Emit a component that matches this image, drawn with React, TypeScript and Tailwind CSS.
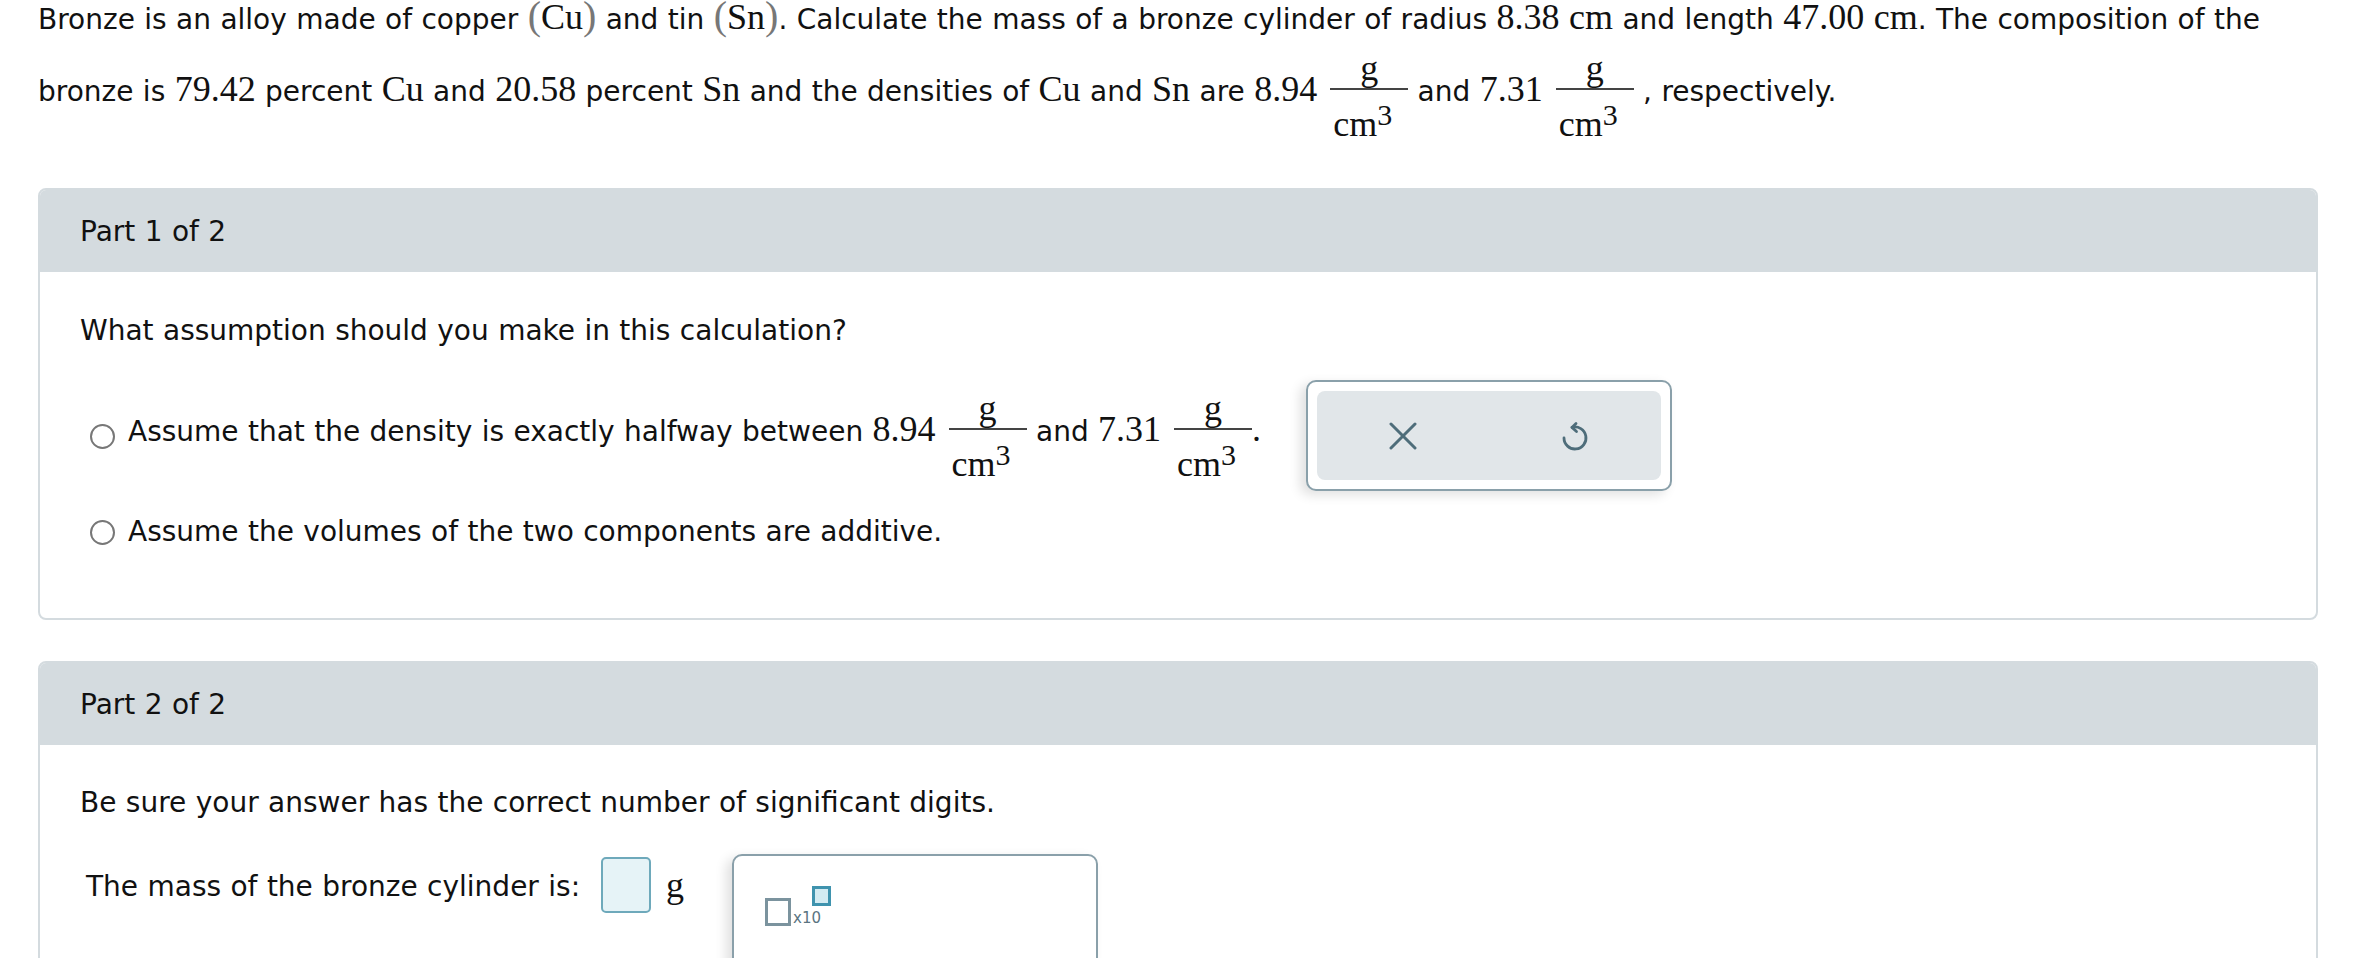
import React from "react";

function M({ children }: { children: React.ReactNode }) {
  return <span className="font-['Liberation_Serif',serif] text-[36px] leading-[0]">{children}</span>;
}

function Paren({ children }: { children: React.ReactNode }) {
  return (
    <span className="font-['Liberation_Serif',serif] leading-[0]">
      <span className="text-[40px] text-[#777]">(</span>
      <span className="text-[36px]">{children}</span>
      <span className="text-[40px] text-[#777]">)</span>
    </span>
  );
}

function Frac() {
  return (
    <span className="inline-flex flex-col w-[78px] align-[21px] ml-[13px] font-['Liberation_Serif',serif] text-[36px] leading-none [word-spacing:0px]">
      <span className="self-center leading-none">g</span>
      <span className="mt-[2px] h-[2px] bg-[#444]" />
      <span className="mt-[16px] pl-[3px] leading-none whitespace-nowrap">
        cm<span className="text-[30px] align-[11px] leading-[0]">3</span>
      </span>
    </span>
  );
}

function Radio() {
  return <span className="block w-[25px] h-[25px] rounded-full border-2 border-[#777] bg-white shrink-0" />;
}

function XIcon() {
  return (
    <svg width="28" height="28" viewBox="0 0 28 28" fill="none" stroke="#4e6d7a" strokeWidth="3" strokeLinecap="round">
      <path d="M2 2 L26 26" />
      <path d="M26 2 L2 26" />
    </svg>
  );
}

function UndoIcon() {
  return (
    <svg width="30" height="32" viewBox="0 0 30 32" fill="none" stroke="#4e6d7a" strokeWidth="2.8" strokeLinecap="round" strokeLinejoin="round">
      <path d="M4 18 A11 11 0 1 0 12 7.4" />
      <path d="M16 3.4 L12 7.4 L16.5 11.5" />
    </svg>
  );
}

function Toolbox() {
  return (
    <div className="w-[366px] h-[111px] border-2 border-[#8aa0aa] rounded-[10px] bg-white p-[9px] shadow-[-6px_4px_12px_rgba(0,0,0,0.12)] shrink-0">
      <div className="flex h-full rounded-[8px] bg-[#e1e6e9]">
        <div className="flex-1 flex items-center justify-center">
          <XIcon />
        </div>
        <div className="flex-1 flex items-center justify-center">
          <UndoIcon />
        </div>
      </div>
    </div>
  );
}

export default function App() {
  return (
    <div className="min-h-screen bg-white text-[#111] font-['DejaVu_Sans',sans-serif] text-[28px] [word-spacing:0.5px] overflow-hidden">
      <div className="w-[2280px] ml-[38px]">
        <div className="h-[40px] leading-[40px] whitespace-nowrap">
          Bronze is an alloy made of copper <Paren>Cu</Paren> and tin <Paren>Sn</Paren>. Calculate the mass of a bronze cylinder of radius <M>8.38 cm</M> and length <M>47.00 cm</M>. The composition of the
        </div>
        <div className="mt-[10px] leading-[40px] whitespace-nowrap">
          bronze is <M>79.42</M> percent <M>Cu</M> and <M>20.58</M> percent <M>Sn</M> and the densities of <M>Cu</M> and <M>Sn</M> are <M>8.94</M>
          <Frac /> and <M>7.31</M>
          <Frac /> , respectively.
        </div>

        <div className="mt-[46px] border-2 border-[#d4dbdf] rounded-[8px] overflow-hidden">
          <div className="h-[82px] bg-[#d4dbdf] pl-[40px] pt-[22px] leading-[40px]">Part 1 of 2</div>
          <div className="pl-[40px] pt-[39px] pb-[66px]">
            <div className="leading-[40px]">What assumption should you make in this calculation?</div>
            <div className="mt-[39px] flex items-start">
              <div className="w-[1226px] shrink-0">
                <div className="flex items-center pl-[10px]">
                  <Radio />
                  <div className="ml-[13px] leading-[40px] whitespace-nowrap">
                    Assume that the density is exactly halfway between <M>8.94</M>
                    <Frac /> and <M>7.31</M>
                    <Frac />
                    <M>.</M>
                  </div>
                </div>
                <div className="mt-[30px] flex items-center pl-[10px]">
                  <Radio />
                  <div className="ml-[13px] leading-[40px] whitespace-nowrap">
                    Assume the volumes of the two components are additive.
                  </div>
                </div>
              </div>
              <div className="-mt-[10px]">
                <Toolbox />
              </div>
            </div>
          </div>
        </div>

        <div className="mt-[41px] border-2 border-[#d4dbdf] rounded-[8px] overflow-hidden">
          <div className="h-[82px] bg-[#d4dbdf] pl-[40px] pt-[22px] leading-[40px]">Part 2 of 2</div>
          <div className="pl-[40px] pt-[38px] pb-[120px]">
            <div className="leading-[40px]">Be sure your answer has the correct number of significant digits.</div>
            <div className="mt-[31px] flex items-start pl-[6px]">
              <div className="mt-[13px] leading-[40px] whitespace-nowrap">The mass of the bronze cylinder is:</div>
              <div className="ml-[21px] mt-[3px] w-[50px] h-[56px] border-2 border-[#6ea9bb] bg-[#e6f3f7] rounded-[5px] shrink-0" />
              <div className="ml-[15px] mt-[11px] font-['Liberation_Serif',serif] text-[36px] leading-[40px]">g</div>
              <div className="ml-[48px] w-[366px] h-[200px] border-2 border-[#8aa0aa] rounded-[10px] bg-white shadow-[-6px_4px_12px_rgba(0,0,0,0.12)] shrink-0">
                <div className="flex items-start mt-[30px] ml-[31px]">
                  <div className="mt-[12px] w-[26px] h-[28px] border-[3px] border-[#7b939e]" />
                  <div className="ml-[2px] flex flex-col items-start">
                    <div className="ml-[19px] w-[19px] h-[20px] border-[3px] border-[#3f93ae] bg-[#d3ebf2]" />
                    <div className="mt-[5px] text-[15px] leading-none text-[#5a7481]">x10</div>
                  </div>
                </div>
              </div>
            </div>
          </div>
        </div>
      </div>
    </div>
  );
}
